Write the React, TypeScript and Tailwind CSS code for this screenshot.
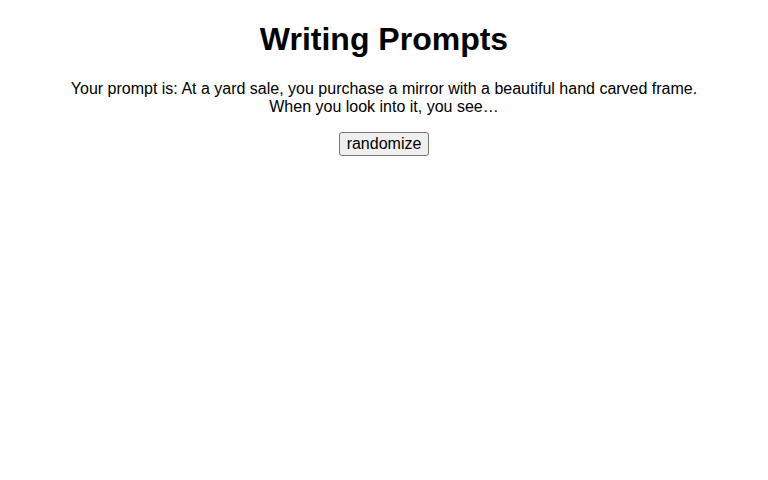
import React, { useState } from 'react';

const prompts = [
  'At a yard sale, you purchase a mirror with a beautiful hand carved frame.',
];

const App: React.FC = () => {
  const [idx, setIdx] = useState(0);

  return (
    <div className="min-h-screen bg-white px-2 text-center text-black font-['Liberation_Sans',Arial,sans-serif]">
      <h1 className="pt-[21.44px] mb-[21.44px] text-[32px] font-bold leading-[normal]">Writing Prompts</h1>
      <p className="mb-4 text-base leading-[normal]">
        Your prompt is: {prompts[idx]}
        <br />
        When you look into it, you see…
      </p>
      <div>
        <button
          onClick={() => setIdx((i) => (i + 1) % prompts.length)}
          className="rounded-[3px] border border-[#767676] bg-[#efefef] px-[7px] py-[2px] text-base leading-[normal] text-black hover:bg-[#e5e5e5]"
        >
          randomize
        </button>
      </div>
    </div>
  );
};

export default App;
